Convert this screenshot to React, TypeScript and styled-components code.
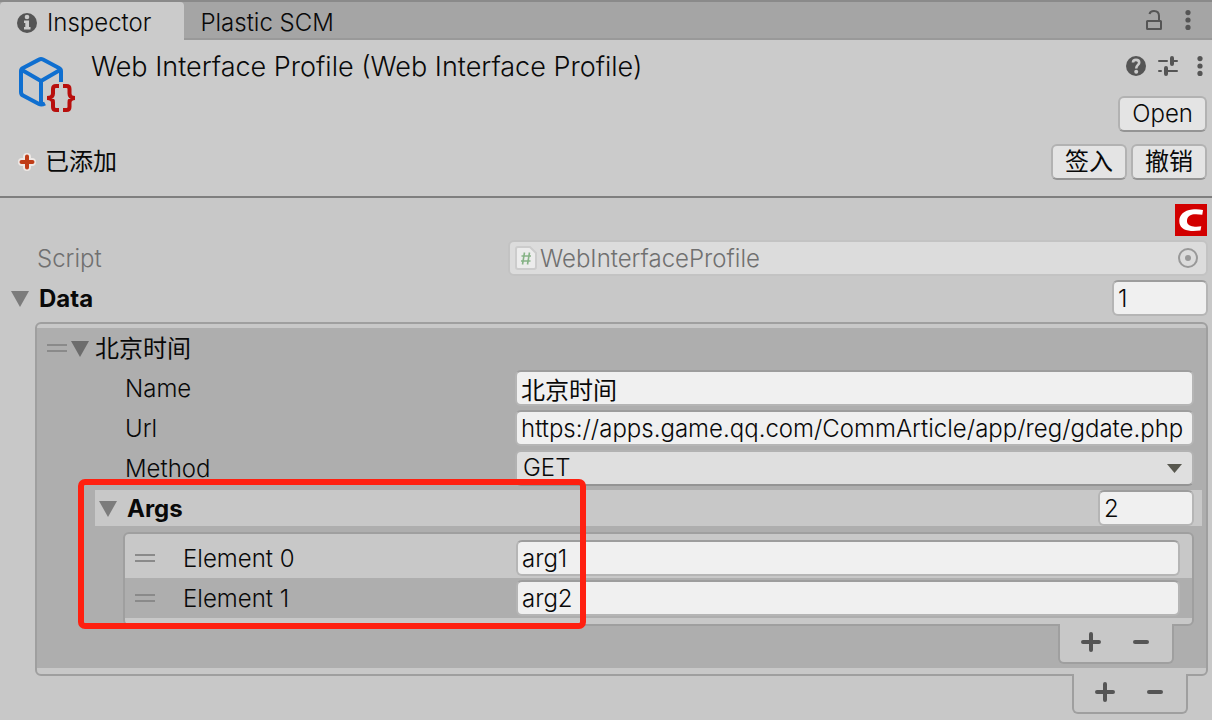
import React from "react";
import styled, { createGlobalStyle, css } from "styled-components";

const color = {
  window: "#c8c8c8",
  header: "#cbcbcb",
  strip: "#a5a5a5",
  selected: "#aeaeae",
  line: "#9f9f9f",
  field: "#f0f0f0",
  text: "#090909",
  dim: "#707070",
  icon: "#555555",
};

const GlobalStyle = createGlobalStyle`
  *, *::before, *::after { box-sizing: border-box; }
  body {
    margin: 0;
    background: ${color.window};
    color: ${color.text};
    font: 350 24px/32px Inter, "Noto Sans CJK SC", sans-serif;
  }
  button, input, select { font: inherit; color: inherit; margin: 0; }
  svg { display: block; flex: none; }
`;

const Window = styled.main`
  min-height: 100vh;
  background: ${color.window};
`;

const TabStrip = styled.div`
  display: flex;
  height: 40px;
  background: ${color.strip};
  border-top: 2px solid #8a8a8a;
  box-shadow: inset 0 -2px #999999;
`;

const Tab = styled.button<{ $active?: boolean }>`
  display: flex;
  align-items: center;
  gap: 10px;
  padding: 4px 16px 0;
  border: 0;
  background: none;
  ${(p) =>
    p.$active &&
    css`
      padding-left: 17px;
      padding-right: 33px;
      background: ${color.header};
      border-radius: 4px 4px 0 0;
    `}
`;

const StripTools = styled.div`
  display: flex;
  align-items: center;
  gap: 23px;
  margin-left: auto;
  padding: 0 21px 2px 0;
`;

const IconButton = styled.button`
  display: flex;
  align-items: center;
  justify-content: center;
  padding: 0;
  border: 0;
  background: none;
  color: ${color.icon};
`;

const Header = styled.header`
  padding: 10px 5px 16px 18px;
  background: ${color.header};
  border-bottom: 2px solid #7f7f7f;
`;

const HeaderMain = styled.div`
  display: flex;
  align-items: flex-start;
`;

const AssetIcon = styled.svg`
  margin: 5px 14px 0 0;
`;

const Title = styled.h1`
  flex: 1;
  margin: 0;
  font-size: 27px;
  font-weight: 350;
  line-height: 34px;
`;

const HeaderSide = styled.div`
  display: flex;
  flex-direction: column;
  align-items: flex-end;
  gap: 14px;
`;

const HeaderTools = styled.div`
  display: flex;
  align-items: center;
  gap: 12px;
  height: 32px;
  padding-right: 4px;
`;

const MoreButton = styled(IconButton)`
  padding-left: 7px;
`;

const PushButton = styled.button<{ lang?: string }>`
  height: 36px;
  padding: 0 12px;
  line-height: 32px;
  background: #e4e4e4;
  border: 2px solid #b2b2b2;
  border-bottom-color: #949494;
  border-radius: 6px;
  &:lang(zh) { font-weight: 400; }
`;

const VersionRow = styled.div`
  display: flex;
  align-items: center;
  gap: 4px;
  margin-top: 12px;
`;

const VersionStatus = styled.span`
  display: flex;
  align-items: center;
  gap: 9px;
  margin-right: auto;
  font-weight: 400;
`;

const Body = styled.section`
  display: flex;
  flex-direction: column;
  padding: 6px 4px 6px 11px;
`;

const BadgeLink = styled.a`
  align-self: flex-end;
  margin: 0 1px 4px 0;
`;

const ScriptRow = styled.div`
  display: grid;
  grid-template-columns: 471px 1fr;
  align-items: center;
  height: 36px;
  padding-left: 26px;
  color: ${color.dim};
`;

const RowLabel = styled.label`
  padding-top: 2px;
`;

const ObjectField = styled.div`
  display: flex;
  align-items: center;
  gap: 3px;
  height: 36px;
  padding: 0 8px 0 5px;
  background: #dcdcdc;
  border: 2px solid #c3c3c3;
  border-radius: 6px;
`;

const ObjectName = styled.span`
  flex: 1;
  padding-top: 2px;
  font-weight: 300;
`;

const Foldout = styled.button<{ $bold?: boolean; $gap: number }>`
  display: flex;
  align-items: center;
  gap: ${(p) => p.$gap}px;
  padding: 2px 0 0;
  border: 0;
  background: none;
  line-height: 34px;
  font-weight: ${(p) => (p.$bold ? 700 : 400)};
`;

const FoldoutRow = styled.div`
  display: flex;
  align-items: center;
  justify-content: space-between;
  height: 36px;
  margin-top: 4px;
`;

const TextField = styled.input`
  width: 100%;
  min-width: 0;
  height: 36px;
  padding: 0 4px;
  background: ${color.field};
  border: 2px solid #b5b5b5;
  border-top-color: #9d9d9d;
  border-radius: 6px;
  outline: 0;
  font-weight: 300;
  &:lang(zh) { font-weight: 400; }
`;

const CountField = styled(TextField)`
  width: 96px;
`;

const ListBox = styled.div<{ $nested?: boolean }>`
  margin: ${(p) => (p.$nested ? "6px 0 0 28px" : "6px 0 0 24px")};
  padding: 4px 0 6px;
  border: 2px solid ${color.line};
  border-radius: 6px;
  background: ${color.window};
`;

const ListItem = styled.div`
  padding: 2px 4px 4px 0;
  background: ${color.selected};
`;

const ItemTitle = styled.div`
  display: flex;
  align-items: center;
  gap: 4px;
  height: 36px;
  padding-left: 10px;
`;

const PropertyRow = styled.div`
  display: grid;
  grid-template-columns: 390px 1fr;
  align-items: center;
  height: 36px;
  margin-top: 4px;
  padding: 0 8px 0 88px;
`;

const SelectWrap = styled.div`
  position: relative;
  display: flex;
`;

const Dropdown = styled.select`
  width: 100%;
  height: 36px;
  padding: 0 6px;
  appearance: none;
  background: #dfdfdf;
  border: 2px solid #b2b2b2;
  border-bottom-color: #949494;
  border-radius: 6px;
  line-height: 32px;
`;

const DropdownArrow = styled.svg`
  position: absolute;
  right: 12px;
  top: 14px;
  pointer-events: none;
`;

const ArgsSection = styled.div`
  position: relative;
  margin: 4px 0 0 58px;
`;

const ArgsHeader = styled(FoldoutRow)`
  margin: 0;
  padding: 0 8px 0 4px;
  background: ${color.window};
`;

const ArgsList = styled.div`
  padding-right: 8px;
`;

const ElementRow = styled.div<{ $selected?: boolean }>`
  display: grid;
  grid-template-columns: 58px 333px 1fr;
  align-items: center;
  height: 40px;
  padding-right: 12px;
  background: ${(p) => (p.$selected ? color.selected : color.window)};
`;

const GripSlot = styled.span`
  padding-left: 10px;
`;

const ListFooter = styled.div`
  position: relative;
  display: flex;
  align-items: center;
  justify-content: space-between;
  width: 116px;
  height: 40px;
  margin: -2px 20px 0 auto;
  padding: 0 23px 2px 21px;
  background: ${color.window};
  border: 2px solid ${color.line};
  border-top: 0;
  border-radius: 0 0 6px 6px;
`;

const Highlight = styled.div`
  position: absolute;
  left: -17px;
  top: -11px;
  width: 508px;
  height: 150px;
  border: 6px solid #ff2010;
  border-radius: 7px;
  pointer-events: none;
`;

const InfoIcon = () => (
  <svg width="20" height="20" viewBox="0 0 20 20">
    <circle cx="10" cy="10" r="10" fill={color.icon} />
    <circle cx="10" cy="4" r="2.300" fill={color.header} />
    <path d="M7 7.500H12V14H13.500V16.500H7V14H8.300V10H7z" fill={color.header} />
  </svg>
);

const LockIcon = () => (
  <svg width="16" height="20" viewBox="0 0 16 20" fill="none" stroke={color.icon} strokeWidth="2">
    <rect x="1" y="11" width="14" height="8" rx="0.5" />
    <path d="M3.500 4C4 2 5.500 1 8 1C11.500 1 13 2.800 13 6V11" />
  </svg>
);

const DotsIcon = () => (
  <svg width="6" height="20" viewBox="0 0 6 20" fill={color.icon}>
    <circle cx="3" cy="2.600" r="2.600" />
    <circle cx="3" cy="10" r="2.600" />
    <circle cx="3" cy="17.400" r="2.600" />
  </svg>
);

const HelpIcon = () => (
  <svg width="20" height="20" viewBox="0 0 20 20" fill="none">
    <circle cx="10" cy="10" r="10" fill={color.icon} />
    <path d="M7 6.600C7 4.800 8.200 3.900 10 3.900S13.200 4.900 13.200 6.700C13.200 9 10.200 9 10.200 12.500" stroke={color.header} strokeWidth="2.600" />
    <circle cx="10.200" cy="15.800" r="2" fill={color.header} />
  </svg>
);

const PresetIcon = () => (
  <svg width="20" height="20" viewBox="0 0 20 20" stroke={color.icon} strokeLinecap="round" fill="none">
    <path d="M1 5H9M16 5H19M1 15H3M10 15H19" strokeWidth="2" />
    <path d="M14 2V8M8 12V18" strokeWidth="4" />
  </svg>
);

const ProfileIcon = () => (
  <AssetIcon width="59" height="60" viewBox="0 0 59 60" fill="none">
    <g stroke="#0f6fd0" strokeWidth="4" strokeLinejoin="round">
      <path d="M43 27V16Q43 14 41 13L25 4.600Q23 3.600 21 4.600L5 13Q3 14 3 16V37Q3 39.500 5 40.600L21 49Q23.500 50.300 27 48.500" />
      <path d="M4 15L23 26L42 15M23 26V49" />
    </g>
    <path
      d="M41 31H38Q35 31 35 34V38.500Q35 43 29 43Q35 43 35 47.500V52Q35 55 38 55H41M45 31H48.500Q51.500 31 51.500 34V38.500Q51.500 43 57 43Q51.500 43 51.500 47.500V52Q51.500 55 48.500 55H45"
      stroke="#b80f0d"
      strokeWidth="4"
    />
  </AssetIcon>
);

const AddedIcon = () => (
  <svg width="18" height="18" viewBox="0 0 18 18" strokeLinecap="round" strokeLinejoin="round">
    <path d="M9 4V14M4 9H14" stroke="#efe9e6" strokeWidth="8" />
    <path d="M9 3.500V14.500M3.500 9H14.500" stroke="#c03d18" strokeWidth="4" />
  </svg>
);

const BadgeIcon = () => (
  <svg width="32" height="32" viewBox="0 0 32 32" fill="none">
    <rect width="32" height="32" fill="#d20000" />
    <path
      d="M28 6C24 5.200 20 5.200 17 5.600C9 6.500 4.300 11 4.300 17C4.300 23 8.500 26.500 16 26.900C19 27 22.500 26.900 25.500 26.500L26.300 22.200C23.500 22.700 20.500 22.800 18.500 22.400C14 21.800 11.700 19.800 12 16.400C12.300 13 14.800 10.700 18.700 10.300C21 10.100 24.500 10.200 27.300 10.800z"
      fill="#ffffff"
    />
  </svg>
);

const ScriptIcon = () => (
  <svg width="22" height="24" viewBox="0 0 22 24" fill="none">
    <path d="M3 1H15L21 7V21Q21 23 19 23H3Q1 23 1 21V3Q1 1 3 1z" fill="#ececec" stroke="#cccccc" strokeWidth="2" />
    <path d="M9.500 6.500L7.500 18.500M14.500 6.500L12.500 18.500M6.500 10H16M6 15H15.500" stroke="#86b386" strokeWidth="1.600" />
  </svg>
);

const PickerIcon = () => (
  <svg width="20" height="20" viewBox="0 0 20 20" fill="none">
    <circle cx="10" cy="10" r="9" stroke="#999999" strokeWidth="2" />
    <circle cx="10" cy="10" r="3" fill="#999999" />
  </svg>
);

const Triangle = ({ fill = "#7c7c7c" }: { fill?: string }) => (
  <svg width="18" height="16" viewBox="0 0 18 16">
    <path d="M0 0H18L9 16z" fill={fill} />
  </svg>
);

const GripIcon = () => (
  <svg width="20" height="8" viewBox="0 0 20 8" fill="#8a8a8a">
    <rect width="20" height="2" />
    <rect y="6" width="20" height="2" />
  </svg>
);

const PlusIcon = () => (
  <svg width="20" height="20" viewBox="0 0 20 20" stroke={color.icon} strokeWidth="4" strokeLinecap="round">
    <path d="M10 2V18M2 10H18" />
  </svg>
);

const MinusIcon = () => (
  <svg width="16" height="20" viewBox="0 0 16 20" stroke={color.icon} strokeWidth="4" strokeLinecap="round">
    <path d="M2 10H14" />
  </svg>
);

const ListButtons = () => (
  <ListFooter>
    <IconButton aria-label="Add element"><PlusIcon /></IconButton>
    <IconButton aria-label="Remove element"><MinusIcon /></IconButton>
  </ListFooter>
);

const elements = ["arg1", "arg2"];

export default function App() {
  return (
    <>
      <GlobalStyle />
      <Window>
        <TabStrip>
          <Tab $active><InfoIcon />Inspector</Tab>
          <Tab>Plastic SCM</Tab>
          <StripTools>
            <IconButton aria-label="Lock"><LockIcon /></IconButton>
            <IconButton aria-label="Tab menu"><DotsIcon /></IconButton>
          </StripTools>
        </TabStrip>

        <Header>
          <HeaderMain>
            <ProfileIcon />
            <Title>Web Interface Profile (Web Interface Profile)</Title>
            <HeaderSide>
              <HeaderTools>
                <IconButton aria-label="Help"><HelpIcon /></IconButton>
                <IconButton aria-label="Presets"><PresetIcon /></IconButton>
                <MoreButton aria-label="More"><DotsIcon /></MoreButton>
              </HeaderTools>
              <PushButton>Open</PushButton>
            </HeaderSide>
          </HeaderMain>
          <VersionRow>
            <VersionStatus><AddedIcon />已添加</VersionStatus>
            <PushButton lang="zh">签入</PushButton>
            <PushButton lang="zh">撤销</PushButton>
          </VersionRow>
        </Header>

        <Body>
          <BadgeLink href="#" aria-label="Console"><BadgeIcon /></BadgeLink>
          <ScriptRow>
            <RowLabel as="span">Script</RowLabel>
            <ObjectField>
              <ScriptIcon />
              <ObjectName>WebInterfaceProfile</ObjectName>
              <IconButton aria-label="Pick object"><PickerIcon /></IconButton>
            </ObjectField>
          </ScriptRow>

          <FoldoutRow>
            <Foldout $bold $gap={10}><Triangle />Data</Foldout>
            <CountField aria-label="Data size" defaultValue="1" />
          </FoldoutRow>

          <ListBox>
            <ListItem>
              <ItemTitle>
                <GripIcon />
                <Foldout $gap={6}><Triangle fill="#6c6c6c" />北京时间</Foldout>
              </ItemTitle>
              <PropertyRow>
                <RowLabel htmlFor="name">Name</RowLabel>
                <TextField id="name" lang="zh" defaultValue="北京时间" />
              </PropertyRow>
              <PropertyRow>
                <RowLabel htmlFor="url">Url</RowLabel>
                <TextField id="url" defaultValue="https://apps.game.qq.com/CommArticle/app/reg/gdate.php" />
              </PropertyRow>
              <PropertyRow>
                <RowLabel htmlFor="method">Method</RowLabel>
                <SelectWrap>
                  <Dropdown id="method" defaultValue="GET">
                    <option>GET</option>
                    <option>POST</option>
                  </Dropdown>
                  <DropdownArrow width="15" height="9" viewBox="0 0 15 9">
                    <path d="M0 0H15L7.500 9z" fill="#58584f" />
                  </DropdownArrow>
                </SelectWrap>
              </PropertyRow>

              <ArgsSection>
                <ArgsHeader>
                  <Foldout $bold $gap={10}><Triangle />Args</Foldout>
                  <CountField aria-label="Args size" defaultValue="2" />
                </ArgsHeader>
                <ArgsList>
                  <ListBox $nested>
                    {elements.map((value, i) => (
                      <ElementRow key={value} $selected={i === 1}>
                        <GripSlot><GripIcon /></GripSlot>
                        <RowLabel htmlFor={value}>Element {i}</RowLabel>
                        <TextField id={value} defaultValue={value} />
                      </ElementRow>
                    ))}
                  </ListBox>
                  <ListButtons />
                </ArgsList>
                <Highlight />
              </ArgsSection>
            </ListItem>
          </ListBox>
          <ListButtons />
        </Body>
      </Window>
    </>
  );
}
